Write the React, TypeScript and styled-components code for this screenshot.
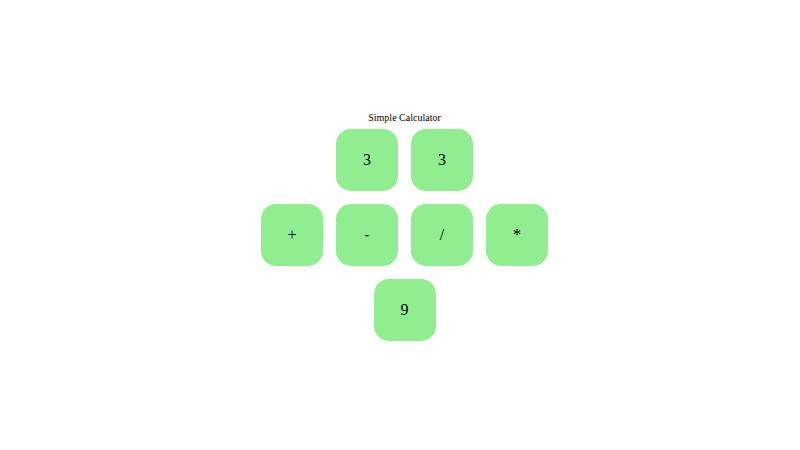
import styled, { createGlobalStyle } from 'styled-components';

const GlobalStyle = createGlobalStyle`
    html, body {
        margin: 0;
        padding: 0;
        background: #ffffff;
        font-family: 'Liberation Serif', 'Times New Roman', serif;
        color: #000000;
    }
`;

const App = () => {
    return (
        <Page>
            <GlobalStyle />
            <Calculator>
                <Title>Simple Calculator</Title>
                <Row>
                    <Key>3</Key>
                    <Key>3</Key>
                </Row>
                <Row>
                    <Key>+</Key>
                    <Key>-</Key>
                    <Key>/</Key>
                    <Key>*</Key>
                </Row>
                <Row>
                    <Key>9</Key>
                </Row>
            </Calculator>
        </Page>
    );
};

const Page = styled.div`
    width: 100vw;
    height: 100vh;
    display: flex;
    align-items: center;
    justify-content: center;
    padding-left: 9px;
    padding-top: 1px;
    box-sizing: border-box;
`;
const Calculator = styled.div`
    display: flex;
    flex-direction: column;
    align-items: center;
    gap: 13px;
`;
const Title = styled.div`
    font-size: 10px;
    line-height: 12px;
    margin-top: 2px;
    margin-bottom: -8px;
`;
const Row = styled.div`
    display: flex;
    gap: 13px;
`;
const Key = styled.div`
    width: 62px;
    height: 62px;
    border-radius: 15px;
    background: #90ee90;
    display: flex;
    align-items: center;
    justify-content: center;
    font-size: 16px;
`;

export default App;
